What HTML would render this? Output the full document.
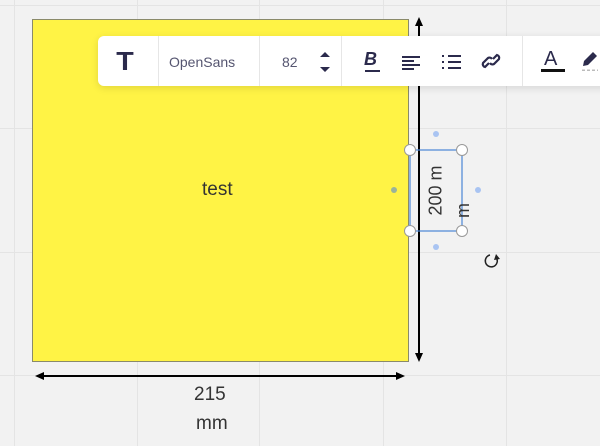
<!DOCTYPE html>
<html><head><meta charset="utf-8"><style>
*{margin:0;padding:0;box-sizing:border-box}
body{width:600px;height:446px;overflow:hidden;background:#f2f2f2;position:relative;font-family:"Liberation Sans",sans-serif}
.a{position:absolute}
.gv{position:absolute;top:0;width:1px;height:446px;background:#e4e4e4}
.gh{position:absolute;left:0;height:1px;width:600px;background:#e4e4e4}
.h{position:absolute;width:12px;height:12px;border-radius:50%;background:#fff;border:1.5px solid #999}
.d{position:absolute;width:6px;height:6px;border-radius:50%;background:#a9c4f2}
.sep{position:absolute;top:0;width:1px;height:50px;background:#e6e6e6}
</style></head><body>
<div class="gv" style="left:14px"></div><div class="gv" style="left:137px"></div><div class="gv" style="left:259px"></div><div class="gv" style="left:383px"></div><div class="gv" style="left:506px"></div>
<div class="gh" style="top:5px"></div><div class="gh" style="top:128px"></div><div class="gh" style="top:252px"></div><div class="gh" style="top:375px"></div>

<div class="a" style="left:32px;top:19px;width:377px;height:343px;background:#fff345;border:1px solid #8a8a6a"></div>
<div class="a" style="left:202px;top:179px;font-size:19px;color:#333">test</div>

<svg class="a" style="left:0;top:0" width="600" height="446">
<line x1="419" y1="24" x2="419" y2="357" stroke="#000" stroke-width="2"/>
<path d="M419 17 L415 26 L423 26Z M419 362 L415 353 L423 353Z" fill="#000"/>
<line x1="41" y1="376" x2="400" y2="376" stroke="#000" stroke-width="2"/>
<path d="M35 376 L44 372 L44 380Z M405 376 L396 372 L396 380Z" fill="#000"/>
<rect x="410" y="150" width="52" height="81" fill="none" stroke="#4a86d6" stroke-width="1.2"/>
<path d="M497 259 A6 6 0 1 1 490 255" fill="none" stroke="#222" stroke-width="1.5"/>
<path d="M496 254 L500 259 L494 260Z" fill="#222"/>
</svg>
<div class="h" style="left:404px;top:144px"></div><div class="h" style="left:456px;top:144px"></div>
<div class="h" style="left:404px;top:225px"></div><div class="h" style="left:456px;top:225px"></div>
<div class="d" style="left:433px;top:131px"></div><div class="d" style="left:433px;top:244px"></div>
<div class="d" style="left:475px;top:187px"></div><div class="d" style="left:391px;top:187px;background:#9ab39a"></div>
<div class="a" style="left:396px;top:180px;width:80px;text-align:center;font-size:18px;color:#333;transform:rotate(-90deg)">200 m</div>
<div class="a" style="left:456px;top:200px;font-size:18px;color:#333;transform:rotate(-90deg)">m</div>

<div class="a" style="left:194px;top:384px;font-size:19px;color:#333">215</div>
<div class="a" style="left:196px;top:413px;font-size:19px;color:#333">mm</div>

<div class="a" style="left:98px;top:36px;width:520px;height:50px;background:#fff;border-radius:6px;box-shadow:0 2px 8px rgba(0,0,0,.12)">
<div class="sep" style="left:60px"></div><div class="sep" style="left:161px"></div><div class="sep" style="left:243px"></div><div class="sep" style="left:424px"></div>
<div class="a" style="left:19px;top:10px;font-size:26px;font-weight:bold;color:#2b2a4c;transform:scaleX(1.1)">T</div>
<div class="a" style="left:71px;top:18px;font-size:14px;color:#555570">OpenSans</div>
<div class="a" style="left:184px;top:18px;font-size:14px;color:#555570">82</div>
<svg class="a" style="left:218px;top:14px" width="18" height="24"><path d="M4 7 L9 2 L14 7Z M4 17 L9 22 L14 17Z" fill="#2b2a4c"/></svg>
<div class="a" style="left:266px;top:13px;font-size:18px;font-weight:bold;font-style:italic;color:#2b2a4c">B</div>
<div class="a" style="left:267px;top:34px;width:15px;height:2px;background:#2b2a4c"></div>
<svg class="a" style="left:302px;top:16px" width="22" height="20"><path d="M2 5H20M2 9H14M2 13H20M2 17H14" stroke="#2b2a4c" stroke-width="2"/></svg>
<svg class="a" style="left:342px;top:16px" width="22" height="20"><path d="M2 4H4M2 10H4M2 16H4M8 4H21M8 10H21M8 16H21" stroke="#2b2a4c" stroke-width="2"/></svg>
<svg class="a" style="left:382px;top:14px" width="22" height="22"><g fill="none" stroke="#2b2a4c" stroke-width="2.2"><path d="M9 13 L5 17 A3 3 0 0 1 3 13 L8 8 A3 3 0 0 1 12 9"/><path d="M13 9 L17 5 A3 3 0 0 1 19 9 L14 14 A3 3 0 0 1 10 13"/></g></svg>
<div class="a" style="left:446px;top:12px;font-size:20px;color:#2b2a4c">A</div>
<div class="a" style="left:443px;top:33px;width:24px;height:3px;background:#111"></div>
<svg class="a" style="left:482px;top:13px" width="20" height="22"><path d="M3 17 L4 12 L13 3 L17 7 L8 16Z" fill="#2b2a4c"/><path d="M2 22H18" stroke="#bbb" stroke-width="3" stroke-dasharray="3 2"/></svg>
</div>
</body></html>
